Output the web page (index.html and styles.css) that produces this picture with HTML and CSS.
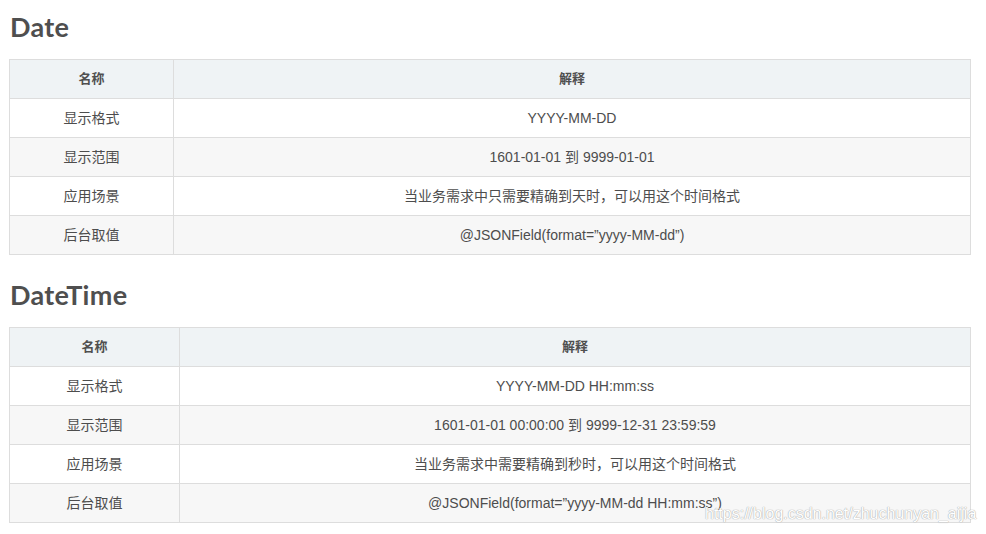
FILE: index.html
```html
<!DOCTYPE html>
<html lang="zh-CN">
  <head>
    <meta charset="UTF-8" />
    <title>Date / DateTime</title>
    <link rel="stylesheet" href="styles.css">
  </head>
  <body>
    <div class="article">
      <h2 class="first">Date</h2>
      <table class="tbl-date">
        <thead>
          <tr><th class="name">名称</th><th>解释</th></tr>
        </thead>
        <tbody>
          <tr><td>显示格式</td><td>YYYY-MM-DD</td></tr>
          <tr><td>显示范围</td><td>1601-01-01 到 9999-01-01</td></tr>
          <tr><td>应用场景</td><td>当业务需求中只需要精确到天时，可以用这个时间格式</td></tr>
          <tr><td>后台取值</td><td>@JSONField(format=”yyyy-MM-dd”)</td></tr>
        </tbody>
      </table>

      <h2>DateTime</h2>
      <table class="tbl-datetime">
        <thead>
          <tr><th class="name">名称</th><th>解释</th></tr>
        </thead>
        <tbody>
          <tr><td>显示格式</td><td>YYYY-MM-DD HH:mm:ss</td></tr>
          <tr><td>显示范围</td><td>1601-01-01 00:00:00 到 9999-12-31 23:59:59</td></tr>
          <tr><td>应用场景</td><td>当业务需求中需要精确到秒时，可以用这个时间格式</td></tr>
          <tr><td>后台取值</td><td>@JSONField(format=”yyyy-MM-dd HH:mm:ss”)</td></tr>
        </tbody>
      </table>
    </div>
    <div class="watermark">https://blog.csdn.net/zhuchunyan_aijia</div>
  </body>
</html>
```

FILE: styles.css
```css
* {
  margin: 0;
  padding: 0;
  box-sizing: border-box;
}
body {
  font-family: "Liberation Sans", Arial, "Noto Sans CJK SC", sans-serif;
  background-color: #fff;
  color: #4d4d4d;
  position: relative;
  width: 986px;
  height: 534px;
  overflow: hidden;
}
.article {
  padding: 0 16px 0 9px;
}
h2 {
  font-family: Lato, "Noto Sans CJK SC", sans-serif;
  font-size: 27px;
  line-height: 32px;
  font-weight: bold;
  color: #4f4f4f;
  letter-spacing: 0.3px;
  margin: 24px 0 16px 1px;
}
h2.first {
  margin-top: 11px;
}
table {
  width: 962px;
  border-collapse: collapse;
  font-size: 14px;
}
th, td {
  border: 1px solid #ddd;
  text-align: center;
  line-height: 22px;
  padding: 8px 10px;
}
th {
  background-color: #eff3f5;
  font-weight: bold;
  color: #4f4f4f;
  font-size: 13px;
}
tbody tr:nth-child(even) td {
  background-color: #f7f7f7;
}
.tbl-date .name {
  width: 164px;
}
.tbl-datetime .name {
  width: 170px;
}
.watermark {
  position: absolute;
  left: 705px;
  top: 505px;
  font-size: 16px;
  font-family: "Liberation Sans", Arial, sans-serif;
  color: #fff;
  text-shadow: 0 0 1px #a8a8a8, 0 0 1px #a8a8a8;
}
```
